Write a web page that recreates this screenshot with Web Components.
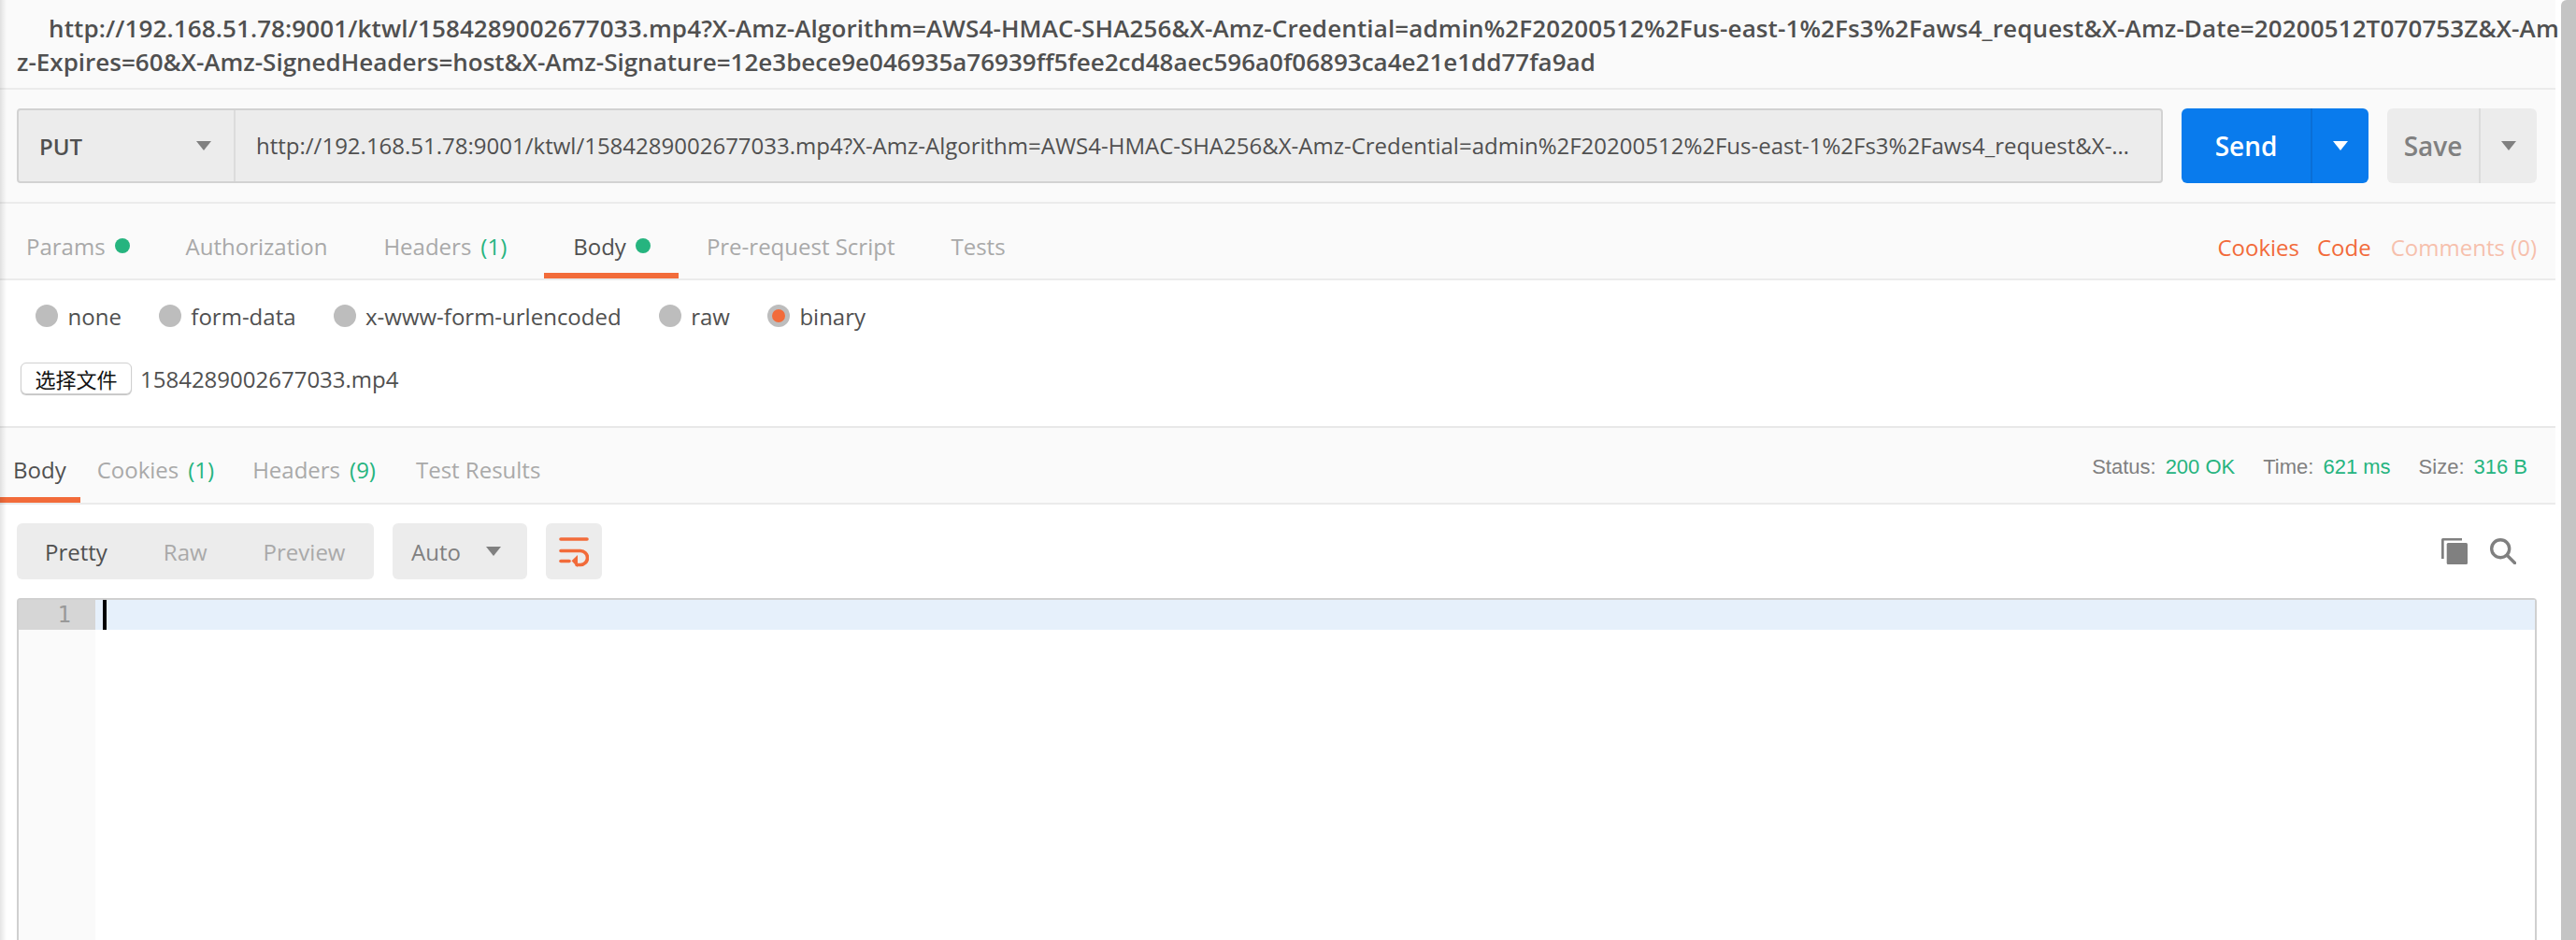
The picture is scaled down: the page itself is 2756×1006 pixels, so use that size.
<!DOCTYPE html>
<html>
<head>
<meta charset="utf-8">
<title>Postman request</title>
<style>
  html, body { margin: 0; height: 100%; background: #fff; overflow: hidden; }
  body { font-family: "Open Sans", "Noto Sans CJK SC", sans-serif; }
</style>
</head>
<body>
<pm-app>
  <pm-title><span>http://192.168.51.78:9001/ktwl/1584289002677033.mp4?X-Amz-Algorithm=AWS4-HMAC-SHA256&amp;X-Amz-Credential=admin%2F20200512%2Fus-east-1%2Fs3%2Faws4_request&amp;X-Amz-Date=20200512T070753Z&amp;X-Am</span><br>z-Expires=60&amp;X-Amz-SignedHeaders=host&amp;X-Amz-Signature=12e3bece9e046935a76939ff5fee2cd48aec596a0f06893ca4e21e1dd77fa9ad</pm-title>
  <pm-urlbar method="PUT" url="http://192.168.51.78:9001/ktwl/1584289002677033.mp4?X-Amz-Algorithm=AWS4-HMAC-SHA256&amp;X-Amz-Credential=admin%2F20200512%2Fus-east-1%2Fs3%2Faws4_request&amp;X-…"></pm-urlbar>
  <pm-request-tabs></pm-request-tabs>
  <pm-body-options></pm-body-options>
  <pm-response-tabs></pm-response-tabs>
  <pm-response-toolbar></pm-response-toolbar>
  <pm-editor></pm-editor>
</pm-app>
<script>
const ORANGE = '#f26b3a';
const GREEN = '#26b47f';

class PmCaret extends HTMLElement {
  constructor() {
    super();
    this.attachShadow({ mode: 'open' }).innerHTML = `
      <style>
        :host { display: inline-block; width: 16px; height: 10px; }
        svg { display: block; }
      </style>
      <svg width="16" height="10" viewBox="0 0 16 10"><path d="M0 0H16L8 10Z" fill="currentColor"/></svg>
    `;
  }
}

class PmTab extends HTMLElement {
  constructor() {
    super();
    this.attachShadow({ mode: 'open' }).innerHTML = `
      <style>
        :host { display: flex; align-items: center; box-sizing: border-box; height: 100%;
                color: #a9a9a9; font-size: 24px; white-space: nowrap; border-bottom: 6px solid transparent; }
        :host([active]) { color: #505050; border-bottom-color: ${ORANGE}; }
        .dot { width: 16px; height: 16px; border-radius: 50%; background: ${GREEN}; margin-left: 10px; display: none; }
        :host([dot]) .dot { display: block; }
        .count { color: ${GREEN}; margin-left: 10px; }
        .count:empty { display: none; }
      </style>
      <slot></slot><span class="count">${this.getAttribute('count') || ''}</span><span class="dot"></span>
    `;
  }
}

class PmRadio extends HTMLElement {
  constructor() {
    super();
    this.attachShadow({ mode: 'open' }).innerHTML = `
      <style>
        :host { display: flex; align-items: center; gap: 10.5px; color: #505050; font-size: 24px; white-space: nowrap; }
        .ring { width: 24px; height: 24px; border-radius: 50%; background: #bdbdbd; display: flex;
                align-items: center; justify-content: center; }
        .ring i { display: none; width: 14px; height: 14px; border-radius: 50%; background: ${ORANGE}; }
        :host([checked]) .ring i { display: block; }
      </style>
      <span class="ring"><i></i></span><slot></slot>
    `;
  }
}

class PmTitle extends HTMLElement {
  constructor() {
    super();
    this.attachShadow({ mode: 'open' }).innerHTML = `
      <style>
        :host { display: block; box-sizing: border-box; height: 96px; padding: 12px 0 0 18px;
                background: #fafafa; border-bottom: 2px solid #ebebeb; color: #505050;
                font-size: 26px; font-weight: 600; line-height: 36px; white-space: nowrap; text-indent: 34px; }
        ::slotted(span) { letter-spacing: .12px; }
      </style>
      <slot></slot>
    `;
  }
}

class PmUrlbar extends HTMLElement {
  constructor() {
    super();
    this.attachShadow({ mode: 'open' }).innerHTML = `
      <style>
        :host { display: flex; box-sizing: border-box; height: 122px; padding: 20px 20px 20px 18px;
                background: #fafafa; border-bottom: 2px solid #ebebeb; }
        .input { flex: 1; min-width: 0; display: flex; box-sizing: border-box; border: 2px solid #d2d2d2;
                 border-radius: 4px; background: #ececec; color: #505050; font-size: 24px; }
        .method { flex: none; box-sizing: border-box; width: 232px; padding: 0 24px 0 22px; display: flex;
                  align-items: center; justify-content: space-between; border-right: 2px solid #dcdcdc;
                  font-weight: 600; font-size: 24px; }
        .method pm-caret { color: #808080; }
        .url { flex: 1; min-width: 0; padding: 0 22px; line-height: 76px; white-space: nowrap; }
        .btn { flex: none; display: flex; height: 80px; border-radius: 6px; font-size: 28px; font-weight: 600; }
        .send { margin-left: 20px; width: 200px; background: #097bed; color: #fff; }
        .save { margin-left: 20px; width: 160px; background: #ececec; color: #808080; }
        .btn b { display: flex; align-items: center; justify-content: center; font-weight: inherit; }
        .send b { width: 138px; }
        .send span { flex: 1; display: flex; align-items: center; justify-content: center; border-left: 2px solid #0a6fd6; }
        .save b { width: 98px; }
        .save span { flex: 1; display: flex; align-items: center; justify-content: center; border-left: 2px solid #dcdcdc; }
      </style>
      <div class="input">
        <div class="method">${this.getAttribute('method')}<pm-caret></pm-caret></div>
        <div class="url"></div>
      </div>
      <div class="btn send"><b>Send</b><span><pm-caret></pm-caret></span></div>
      <div class="btn save"><b>Save</b><span><pm-caret></pm-caret></span></div>
    `;
    this.shadowRoot.querySelector('.url').textContent = this.getAttribute('url');
  }
}

class PmRequestTabs extends HTMLElement {
  constructor() {
    super();
    this.attachShadow({ mode: 'open' }).innerHTML = `
      <style>
        :host { display: flex; box-sizing: border-box; height: 82px; padding: 0 20px 0 28px; align-items: stretch;
                background: #fafafa; border-bottom: 2px solid #ebebeb; }
        nav { display: flex; flex: 1; }
        pm-tab { margin-right: 60px; padding-top: 16px; }
        pm-tab[active] { padding-left: 31px; padding-right: 30px; margin-left: -20px; margin-right: 30px; }
        aside { display: flex; gap: 21px; align-items: center; padding-top: 12px; font-size: 24px; color: ${ORANGE}; }
        aside span:first-child { margin-right: -2px; }
        .off { opacity: .4; }
      </style>
      <nav>
        <pm-tab dot>Params</pm-tab>
        <pm-tab>Authorization</pm-tab>
        <pm-tab count="(1)">Headers</pm-tab>
        <pm-tab active dot>Body</pm-tab>
        <pm-tab>Pre-request Script</pm-tab>
        <pm-tab>Tests</pm-tab>
      </nav>
      <aside><span>Cookies</span><span>Code</span><span class="off">Comments (0)</span></aside>
    `;
  }
}

class PmBodyOptions extends HTMLElement {
  constructor() {
    super();
    this.attachShadow({ mode: 'open' }).innerHTML = `
      <style>
        :host { display: block; box-sizing: border-box; height: 158px; background: #fff; border-bottom: 2px solid #e8e8e8; }
        .radios { display: flex; gap: 40px; padding: 26px 0 0 38px; height: 24px; }
        .file { display: flex; align-items: center; gap: 9px; margin-top: 38px; padding-left: 22px;
                color: #505050; font-size: 24px; }
        button { box-sizing: border-box; width: 119px; height: 34px; padding: 0; background: #fff; color: #111;
                 border: 1px solid #d0d0d0; border-radius: 6px; box-shadow: 0 1px 1px rgba(0,0,0,.25);
                 font: 22px "Noto Sans CJK SC", sans-serif; line-height: 30px; }
      </style>
      <div class="radios">
        <pm-radio>none</pm-radio>
        <pm-radio>form-data</pm-radio>
        <pm-radio>x-www-form-urlencoded</pm-radio>
        <pm-radio>raw</pm-radio>
        <pm-radio checked>binary</pm-radio>
      </div>
      <div class="file"><button>选择文件</button><span>1584289002677033.mp4</span></div>
    `;
  }
}

class PmResponseTabs extends HTMLElement {
  constructor() {
    super();
    this.attachShadow({ mode: 'open' }).innerHTML = `
      <style>
        :host { display: flex; box-sizing: border-box; height: 82px; background: #fafafa;
                border-bottom: 2px solid #ebebeb; }
        nav { display: flex; flex: 1; }
        pm-tab { margin-right: 41px; padding-top: 15px; }
        pm-tab[count="(9)"] { margin-right: 43px; }
        pm-tab[active] { padding: 15px 15px 0 14px; margin-right: 18px; }
        .stats { display: flex; align-items: center; padding: 3px 30px 0 0; color: #808080;
                 font: 22px "Liberation Sans", Arial, sans-serif; }
        .stats em { font-style: normal; color: ${GREEN}; margin: 0 30px 0 10px; }
        .stats em:last-child { margin-right: 0; }
      </style>
      <nav>
        <pm-tab active>Body</pm-tab>
        <pm-tab count="(1)">Cookies</pm-tab>
        <pm-tab count="(9)">Headers</pm-tab>
        <pm-tab>Test Results</pm-tab>
      </nav>
      <div class="stats">Status:<em>200 OK</em>Time:<em>621 ms</em>Size:<em>316 B</em></div>
    `;
  }
}

class PmResponseToolbar extends HTMLElement {
  constructor() {
    super();
    this.attachShadow({ mode: 'open' }).innerHTML = `
      <style>
        :host { display: flex; align-items: center; box-sizing: border-box; height: 100px; padding: 20px 42px 20px 18px;
                background: #fff; font-size: 24px; }
        .box { height: 60px; border-radius: 6px; background: #ececec; display: flex; align-items: center; }
        .views { width: 382px; color: #a9a9a9; }
        .views .pretty { margin-left: 30px; color: #505050; }
        .views .raw { margin-left: 60px; }
        .views .preview { margin-left: 60px; }
        .auto { width: 144px; margin-left: 20px; padding: 0 28px 0 20px; box-sizing: border-box;
                justify-content: space-between; color: #808080; }
        .wrap { width: 60px; margin-left: 20px; justify-content: center; }
        .tools { margin-left: auto; display: flex; gap: 24px; color: #808080; }
        svg { display: block; }
      </style>
      <div class="box views"><span class="pretty">Pretty</span><span class="raw">Raw</span><span class="preview">Preview</span></div>
      <div class="box auto">Auto<pm-caret></pm-caret></div>
      <div class="box wrap">
        <svg width="32" height="33" viewBox="0 0 32 33" fill="none" stroke="${ORANGE}" stroke-width="3.6" stroke-linecap="round">
          <path d="M2 3H30"/>
          <path d="M2 15.5H23a7.5 7.5 0 0 1 0 15H19"/>
          <path d="M2 26.5H11"/>
          <path d="M13.5 26.3L20 20V33Z" fill="${ORANGE}" stroke="none"/>
        </svg>
      </div>
      <div class="tools">
        <svg width="28" height="28" viewBox="0 0 28 28" fill="currentColor">
          <path d="M0 22V1.5Q0 0 1.5 0H22V2.6H2.7V22Z"/>
          <rect x="5.7" y="5" width="22.3" height="23" rx="1.5"/>
        </svg>
        <svg width="28" height="28" viewBox="0 0 28 28" fill="none" stroke="currentColor" stroke-width="3.4">
          <circle cx="11.2" cy="11.2" r="9.5"/>
          <path d="M18.5 18.5L26.5 26.5" stroke-linecap="round"/>
        </svg>
      </div>
    `;
  }
}

class PmEditor extends HTMLElement {
  constructor() {
    super();
    this.attachShadow({ mode: 'open' }).innerHTML = `
      <style>
        :host { display: flex; flex: 1; min-height: 0; margin: 0 20px 0 18px; box-sizing: border-box; background: #fff;
                border: 2px solid #d0d0d0; border-bottom: 0; border-radius: 4px 4px 0 0; }
        .gutter { flex: none; width: 82px; background: #fafafa; }
        .num { height: 32px; background: #d6d6d6; color: #999; text-align: right; padding-right: 26px; box-sizing: border-box;
               font: 24px/32px "DejaVu Sans Mono", monospace; }
        .code { flex: 1; }
        .line { height: 32px; background: #e6f0fb; padding-left: 8px; box-sizing: border-box; }
        .cursor { display: block; width: 4px; height: 32px; background: #000; }
      </style>
      <div class="gutter"><div class="num">1</div></div>
      <div class="code"><div class="line"><span class="cursor"></span></div></div>
    `;
  }
}

class PmApp extends HTMLElement {
  constructor() {
    super();
    this.attachShadow({ mode: 'open' }).innerHTML = `
      <style>
        :host { display: flex; height: 100vh; position: relative; background: #fff; }
        main { flex: none; width: 2734px; display: flex; flex-direction: column; }
        .edge { position: absolute; left: 0; top: 0; bottom: 0; width: 7px; pointer-events: none;
                background: linear-gradient(90deg, rgba(0,0,0,.1), rgba(0,0,0,0)); }
        .scrollbar { flex: none; width: 16px; margin-left: 6px; background: #c4c4c4; border-top-left-radius: 6px; }
      </style>
      <main><slot></slot></main>
      <div class="edge"></div>
      <div class="scrollbar"></div>
    `;
  }
}

customElements.define('pm-caret', PmCaret);
customElements.define('pm-tab', PmTab);
customElements.define('pm-radio', PmRadio);
customElements.define('pm-title', PmTitle);
customElements.define('pm-urlbar', PmUrlbar);
customElements.define('pm-request-tabs', PmRequestTabs);
customElements.define('pm-body-options', PmBodyOptions);
customElements.define('pm-response-tabs', PmResponseTabs);
customElements.define('pm-response-toolbar', PmResponseToolbar);
customElements.define('pm-editor', PmEditor);
customElements.define('pm-app', PmApp);
</script>
</body>
</html>
